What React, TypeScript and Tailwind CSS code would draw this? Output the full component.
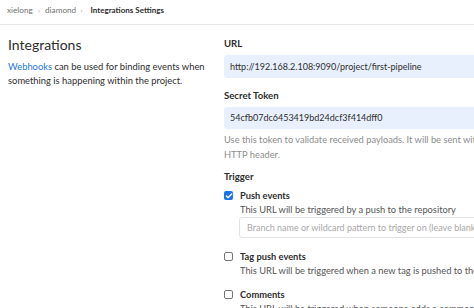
import { Check } from 'lucide-react'

function Checkbox({ checked }: { checked?: boolean }) {
  return checked ? (
    <span className="mt-[2px] flex h-[9px] w-[9px] shrink-0 items-center justify-center rounded-[2px] bg-[#1a73e8]">
      <Check className="h-[8px] w-[8px] text-white" strokeWidth={4} />
    </span>
  ) : (
    <span className="mt-[2px] block h-[9px] w-[9px] shrink-0 rounded-[2px] border border-[#777] bg-white" />
  )
}

function Trigger({ title, desc, checked }: { title: string; desc: string; checked?: boolean }) {
  return (
    <div className="flex gap-[7px]">
      <Checkbox checked={checked} />
      <div className="min-w-0 whitespace-nowrap">
        <div className="text-[9.3px] font-bold leading-[14px] text-[#2e2e2e]">{title}</div>
        <div className="text-[9.3px] leading-[14px] text-[#555]">{desc}</div>
      </div>
    </div>
  )
}

export default function App() {
  return (
    <div className="h-[308px] w-[474px] overflow-hidden bg-white font-['Lato',sans-serif] text-[#2e2e2e]">
      <nav className="flex h-[25px] items-center border-b border-[#e5e5e5] pb-[4px] pl-[7px] text-[#707070]">
        <span className="text-[8.2px]">xielong</span>
        <span className="mx-[5px] text-[8px] text-[#aaa]">›</span>
        <span className="text-[8.2px]">diamond</span>
        <span className="ml-[4px] mr-[8px] text-[8px] text-[#aaa]">›</span>
        <span className="text-[8px] font-bold text-[#2e2e2e]">Integrations Settings</span>
      </nav>

      <div className="flex">
        <div className="w-[224px] shrink-0 pl-[8px] pt-[10px]">
          <h1 className="text-[14px] leading-[20px] text-[#2e2e2e]">Integrations</h1>
          <p className="mt-[5px] text-[9.4px] leading-[14px] text-[#2e2e2e]">
            <span className="text-[#1f78d1]">Webhooks</span> can be used for binding events when
            <br />
            something is happening within the project.
          </p>
        </div>

        <div className="min-w-0 flex-1 whitespace-nowrap pt-[12px]">
          <label className="block text-[9.6px] font-bold leading-[14px]">URL</label>
          <div className="mt-[4px] flex h-[23px] w-[300px] items-center rounded-[3px] bg-[#e8f0fe] px-[6px] text-[9px]">
            http://192.168.2.108:9090/project/first-pipeline
          </div>

          <label className="mt-[11px] block text-[9.6px] font-bold leading-[14px]">Secret Token</label>
          <div className="mt-[4px] flex h-[22px] w-[300px] items-center rounded-[3px] bg-[#e8f0fe] px-[6px] text-[9px]">
            54cfb07dc6453419bd24dcf3f414dff0
          </div>
          <p className="mt-[3px] text-[9.3px] leading-[15px] text-[#8c8c8c]">
            Use this token to validate received payloads. It will be sent with the request in the X-Gitlab-Token
            <br />
            HTTP header.
          </p>

          <div className="mt-[8px] text-[9.6px] font-bold leading-[14px]">Trigger</div>

          <div className="mt-[5px]">
            <Trigger checked title="Push events" desc="This URL will be triggered by a push to the repository" />
            <div className="ml-[15px] flex h-[21px] w-[300px] items-center rounded-[3px] border border-[#e3e3e3] px-[7px] text-[9px] text-[#a8a8a8]">
              Branch name or wildcard pattern to trigger on (leave blank for all)
            </div>
          </div>

          <div className="mt-[12px]">
            <Trigger title="Tag push events" desc="This URL will be triggered when a new tag is pushed to the repository" />
          </div>
          <div className="mt-[10px]">
            <Trigger title="Comments" desc="This URL will be triggered when someone adds a comment" />
          </div>
        </div>
      </div>
    </div>
  )
}
